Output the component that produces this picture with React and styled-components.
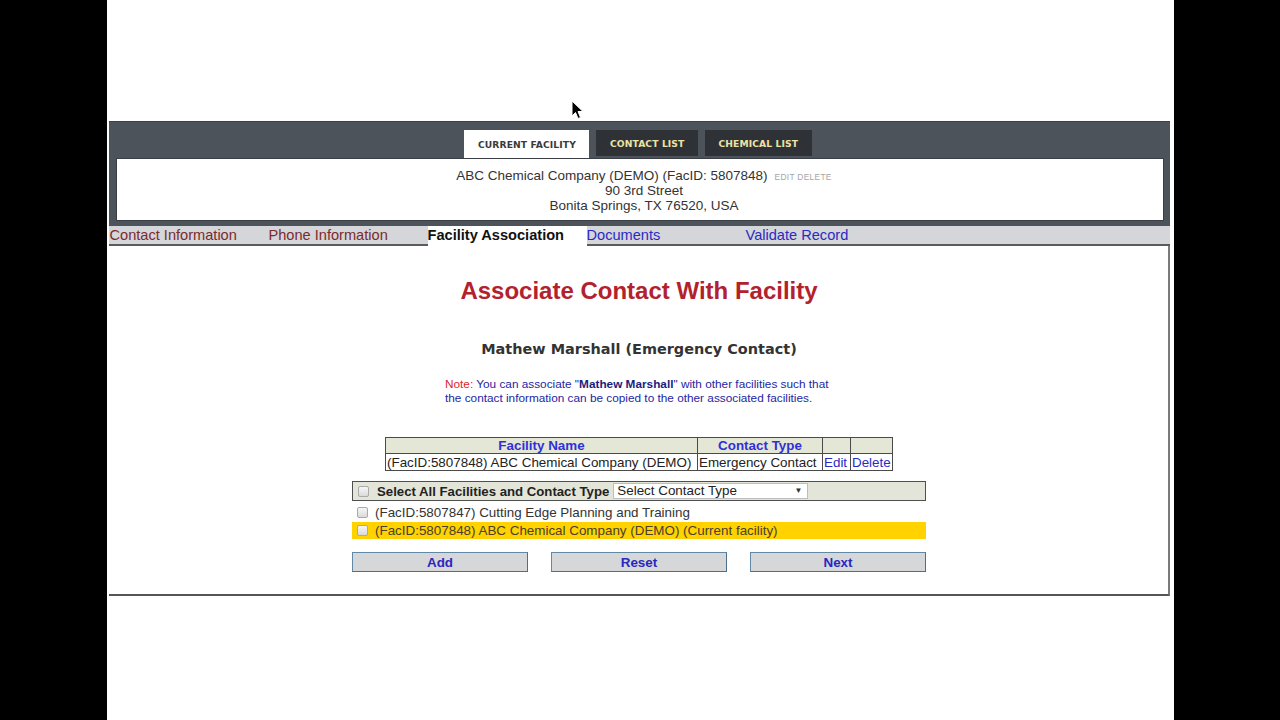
import React from "react";
import styled, { createGlobalStyle } from "styled-components";

const GlobalStyle = createGlobalStyle`
  html, body {
    margin: 0;
    padding: 0;
    background: #000;
    height: 100%;
  }
  body {
    font-family: "Liberation Sans", Arial, sans-serif;
    color: #333;
  }
`;

const Screen = styled.div`
  position: relative;
  width: 1280px;
  height: 720px;
  overflow: hidden;
  background: #000;
`;

const Column = styled.div`
  width: 1067px;
  height: 720px;
  margin: 0 auto;
  background: #fff;
  padding: 121px 0 0 2px;
  box-sizing: border-box;
`;

const Frame = styled.div`
  width: 1061px;
`;

const Header = styled.header`
  background: #4d535b;
  border-top: 1px solid #3c4046;
  padding: 8px 6px 5px 7px;
  display: flex;
  flex-direction: column;
`;

const Tabs = styled.nav`
  display: flex;
  justify-content: center;
  gap: 7px;
  height: 28px;
  align-items: stretch;
  padding-right: 3px;
`;

const Tab = styled.a`
  display: flex;
  align-items: center;
  padding: 0 13.5px;
  font-family: "DejaVu Sans", Verdana, sans-serif;
  font-weight: bold;
  font-size: 9.2px;
  text-transform: uppercase;
  text-decoration: none;
  letter-spacing: 0.1px;
  background: ${(p) => (p.$current ? "#fff" : "#2e3237")};
  color: ${(p) => (p.$current ? "#3a3a3a" : "#eee2a4")};
  margin-bottom: ${(p) => (p.$current ? "0" : "2px")};
`;

const InfoBox = styled.div`
  background: #fff;
  border: 1px solid #3a3f45;
  box-sizing: border-box;
  height: 63px;
  padding: 3px 0 0 9px;
  display: flex;
  flex-direction: column;
  align-items: center;
  justify-content: center;
  font-size: 13.5px;
  line-height: 14.5px;
  color: #333;
`;

const InfoLine = styled.div`
  display: flex;
  align-items: baseline;
  gap: 7px;
`;

const SmallAction = styled.span`
  font-size: 8.4px;
  letter-spacing: 0.3px;
  color: #a5a5a5;
  text-transform: uppercase;
`;

const NavBar = styled.nav`
  display: flex;
  height: 18px;
  background: #d4d6d9;
  border-bottom: 2px solid #595b5e;
  padding-left: 1px;
`;

const NavItem = styled.a`
  width: 159px;
  font-size: 14.6px;
  line-height: 18px;
  text-decoration: none;
  white-space: nowrap;
  color: ${(p) => (p.$tone === "maroon" ? "#7c2a2c" : p.$tone === "blue" ? "#2a2ac4" : "#111")};
  font-weight: ${(p) => (p.$active ? "bold" : "normal")};
  background: ${(p) => (p.$active ? "#fff" : "transparent")};
  box-shadow: ${(p) => (p.$active ? "0 2px 0 #fff" : "none")};
`;

const Content = styled.main`
  height: 348px;
  padding-left: 2px;
  border-right: 2px solid #7a7a7a;
  border-bottom: 2px solid #555;
  display: flex;
  flex-direction: column;
  align-items: center;
`;

const Title = styled.h1`
  margin: 31px 0 0;
  font-size: 24px;
  line-height: 28px;
  font-weight: bold;
  color: #b3212d;
`;

const ContactName = styled.h2`
  margin: 35px 0 0;
  font-family: "DejaVu Sans", Verdana, sans-serif;
  font-size: 14.45px;
  line-height: 18px;
  font-weight: bold;
  color: #333;
`;

const Note = styled.p`
  margin: 19px 0 0;
  width: 392px;
  padding-left: 4px;
  font-size: 11.8px;
  line-height: 14px;
  color: #2525a2;
`;

const NoteLabel = styled.span`
  color: #e0242c;
`;

const Strong = styled.b`
  color: #1c1c80;
`;

const Assoc = styled.table`
  margin-top: 32px;
  width: 507px;
  table-layout: fixed;
  border-collapse: collapse;
  font-size: 13.4px;
  line-height: 15px;
`;

const HeadCell = styled.th`
  background: #e4e6d6;
  border: 1px solid #4a4a4a;
  padding: 0 1px;
  color: #3030d8;
  font-weight: bold;
  text-align: center;
  height: 15px;
`;

const Cell = styled.td`
  border: 1px solid #4a4a4a;
  padding: 0 1px;
  white-space: nowrap;
  overflow: hidden;
  color: ${(p) => (p.$link ? "#2a2ac8" : "#222")};
  height: 16px;
`;

const Controls = styled.form`
  margin-top: 10px;
  width: 574px;
  display: flex;
  flex-direction: column;
  font-size: 13.4px;
`;

const SelectAllRow = styled.div`
  display: flex;
  align-items: center;
  height: 18px;
  background: #e3e5d8;
  border: 1px solid #4f4f4f;
  padding-left: 5px;
  gap: 8px;
`;

const SelectAllLabel = styled.label`
  font-weight: bold;
  font-size: 13.2px;
  color: #222;
`;

const SelectWrap = styled.div`
  position: relative;
  width: 195px;
  height: 16px;
  margin-left: -4px;
  &::after {
    content: "▼";
    position: absolute;
    right: 6px;
    top: 3px;
    font-size: 8px;
    color: #333;
    pointer-events: none;
  }
`;

const Select = styled.select`
  appearance: none;
  width: 100%;
  height: 16px;
  padding: 0 0 0 3px;
  border: 1px solid #bdbdbd;
  background: #fff;
  font-family: "Liberation Sans", Arial, sans-serif;
  font-size: 13.4px;
  line-height: 14px;
  color: #222;
  box-sizing: border-box;
`;

const FacilityRow = styled.label`
  display: flex;
  align-items: center;
  gap: 7px;
  padding-left: 5px;
  height: ${(p) => (p.$current ? "17px" : "19px")};
  margin-top: ${(p) => (p.$current ? "0" : "2px")};
  background: ${(p) => (p.$current ? "#ffd200" : "transparent")};
  color: ${(p) => (p.$current ? "#4a4030" : "#333")};
`;

const Check = styled.input.attrs({ type: "checkbox" })`
  appearance: none;
  margin: 0;
  width: 11px;
  height: 11px;
  border: 1px solid #a9a9a9;
  border-radius: 2px;
  background: linear-gradient(#f6f6f6, #dadada);
  box-sizing: border-box;
  flex: none;
`;

const ButtonRow = styled.div`
  display: flex;
  justify-content: space-between;
  margin-top: 13px;
`;

const Button = styled.button`
  width: 176px;
  height: 20px;
  padding: 0;
  background: #d6d7d9;
  border: 1px solid #6288a8;
  border-right-color: #4d6f8c;
  border-bottom-color: #4d6f8c;
  font-family: "Liberation Sans", Arial, sans-serif;
  font-size: 13.4px;
  font-weight: bold;
  color: #2828c0;
`;

const Pointer = styled.svg`
  position: absolute;
  left: 571px;
  top: 100px;
  pointer-events: none;
`;

export default function App() {
  return (
    <Screen>
      <GlobalStyle />
      <Column>
        <Frame>
          <Header>
            <Tabs>
              <Tab $current>Current Facility</Tab>
              <Tab>Contact List</Tab>
              <Tab>Chemical List</Tab>
            </Tabs>
            <InfoBox>
              <InfoLine>
                <span>ABC Chemical Company (DEMO) (FacID: 5807848)</span>
                <SmallAction>Edit Delete</SmallAction>
              </InfoLine>
              <div>90 3rd Street</div>
              <div>Bonita Springs, TX 76520, USA</div>
            </InfoBox>
          </Header>
          <NavBar>
            <NavItem $tone="maroon">Contact Information</NavItem>
            <NavItem $tone="maroon">Phone Information</NavItem>
            <NavItem $active>Facility Association</NavItem>
            <NavItem $tone="blue">Documents</NavItem>
            <NavItem $tone="blue">Validate Record</NavItem>
          </NavBar>
          <Content>
            <Title>Associate Contact With Facility</Title>
            <ContactName>Mathew Marshall (Emergency Contact)</ContactName>
            <Note>
              <NoteLabel>Note:</NoteLabel> You can associate "<Strong>Mathew Marshall</Strong>" with other
              facilities such that the contact information can be copied to the other associated facilities.
            </Note>
            <Assoc>
              <colgroup>
                <col style={{ width: 312 }} />
                <col style={{ width: 125 }} />
                <col style={{ width: 28 }} />
                <col style={{ width: 42 }} />
              </colgroup>
              <thead>
                <tr>
                  <HeadCell>Facility Name</HeadCell>
                  <HeadCell>Contact Type</HeadCell>
                  <HeadCell></HeadCell>
                  <HeadCell></HeadCell>
                </tr>
              </thead>
              <tbody>
                <tr>
                  <Cell>(FacID:5807848) ABC Chemical Company (DEMO)</Cell>
                  <Cell>Emergency Contact</Cell>
                  <Cell $link>Edit</Cell>
                  <Cell $link>Delete</Cell>
                </tr>
              </tbody>
            </Assoc>
            <Controls>
              <SelectAllRow>
                <Check />
                <SelectAllLabel>Select All Facilities and Contact Type</SelectAllLabel>
                <SelectWrap>
                  <Select defaultValue="">
                    <option value="">Select Contact Type</option>
                    <option>Emergency Contact</option>
                  </Select>
                </SelectWrap>
              </SelectAllRow>
              <FacilityRow>
                <Check />
                (FacID:5807847) Cutting Edge Planning and Training
              </FacilityRow>
              <FacilityRow $current>
                <Check />
                (FacID:5807848) ABC Chemical Company (DEMO) (Current facility)
              </FacilityRow>
              <ButtonRow>
                <Button type="button">Add</Button>
                <Button type="button">Reset</Button>
                <Button type="button">Next</Button>
              </ButtonRow>
            </Controls>
          </Content>
        </Frame>
      </Column>
      <Pointer width="13" height="20" viewBox="0 0 13 20">
        <path d="M1 1 L1 16 L4.5 12.5 L7 18.5 L9.5 17.5 L7 11.5 L12 11.5 Z" fill="#000" stroke="#fff" strokeWidth="1" strokeLinejoin="round" />
      </Pointer>
    </Screen>
  );
}
